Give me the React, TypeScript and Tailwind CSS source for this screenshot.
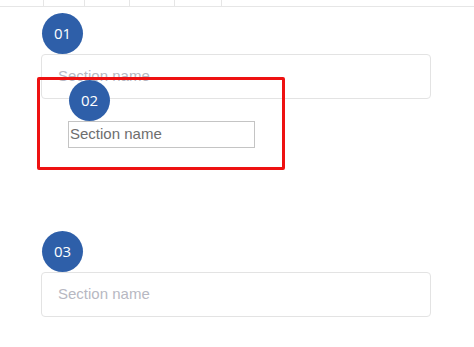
import React from "react";

const Circle = ({ n }: { n: string }) => (
  <div className="flex h-[41px] w-[41px] items-center justify-center rounded-full bg-[#2e5fa9] text-[15px] font-medium text-white [font-family:'Open_Sans',sans-serif]">
    {n}
  </div>
);

const Field = () => (
  <div className="flex h-[45px] items-center rounded-[4px] border border-[#e3e3e3] pl-[16px] text-[15px] text-[#b7b8c2] [font-family:'Liberation_Sans',Arial,sans-serif]">
    Section name
  </div>
);

export default function App() {
  const tabs = [44, 41, 45, 45, 47];
  return (
    <div className="relative h-[347px] w-[474px] overflow-hidden bg-white">
      <div className="flex h-[7px] border-b border-[#e6e6e6]">
        {tabs.map((w, i) => (
          <div key={i} style={{ width: w }} className="h-full border-r border-[#e6e6e6]" />
        ))}
      </div>
      <div className="flex flex-col pl-[41px] pr-[43px] pt-[6px]">
        <div className="ml-[1px]">
          <Circle n="01" />
        </div>
        <Field />
        <div className="ml-[1px] mt-[132px]">
          <Circle n="03" />
        </div>
        <Field />
      </div>
      <div className="absolute left-[37px] top-[77px] flex h-[93px] w-[248px] flex-col items-start rounded-[2px] border-[3px] border-[#ee1111] pl-[28px]">
        <div className="ml-[1px]">
          <Circle n="02" />
        </div>
        <div className="flex h-[27px] w-[187px] items-center border border-[#c4c4c4] bg-white pl-[1px] text-[15px] text-[#6e6e6e] [font-family:'Liberation_Sans',Arial,sans-serif]">
          Section name
        </div>
      </div>
    </div>
  );
}
